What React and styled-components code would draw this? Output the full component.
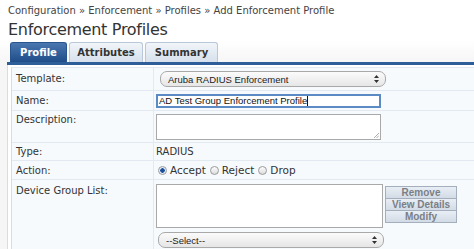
import React from 'react'
import styled, { createGlobalStyle } from 'styled-components'

const Global = createGlobalStyle`
  html, body { margin: 0; padding: 0; background: #fff; }
  body { font-family: "DejaVu Sans", Verdana, sans-serif; color: #333; }
`

const Page = styled.div`
  width: 474px;
  height: 249px;
  overflow: hidden;
  padding: 4px 0 0 7px;
  box-sizing: border-box;
  background: linear-gradient(#fff 0, #fff 40px, #f6f6f6 62px);
`

const Crumbs = styled.div`
  font-size: 10px;
  line-height: 13px;
  color: #444;
  padding-left: 1px;
`

const Title = styled.h1`
  margin: 3px 0 2px 1px;
  font-size: 16px;
  line-height: 20px;
  letter-spacing: -0.3px;
  font-weight: normal;
  color: #333;
`

const TabBar = styled.div`
  display: flex;
  gap: 2px;
  padding-left: 3px;
  border-bottom: 3px solid #2e5e9a;
`

const Tab = styled.div`
  width: ${p => p.w}px;
  height: 20px;
  box-sizing: border-box;
  display: flex;
  align-items: center;
  justify-content: center;
  font-size: 10px;
  font-weight: bold;
  border-radius: 3px 3px 0 0;
  color: ${p => (p.active ? '#fff' : '#333')};
  background: ${p =>
    p.active
      ? 'linear-gradient(#4a77b0, #1f4d89)'
      : 'linear-gradient(#f1f5f9, #d6e0ec)'};
  border: 1px solid ${p => (p.active ? '#28558f' : '#b9c7d8')};
  border-bottom: none;
`

const Panel = styled.div`
  border-left: 1px solid #d7dde6;
  padding: 2px 0 0 3px;
  background: #fff;
`

const Form = styled.div`
  display: grid;
  grid-template-columns: 142px 1fr;
  border-left: 1px solid #d7dde6;
  border-top: 1px solid #e2e9f0;
  background: #f6fafd;
`

const Label = styled.div`
  font-size: 10px;
  color: #333;
  padding: ${p => p.pad || '5px 4px'};
  border-right: 1px solid #e2e9f0;
  border-bottom: 1px solid #e2e9f0;
  height: ${p => p.h}px;
  box-sizing: border-box;
`

const Cell = styled.div`
  font-size: 10px;
  color: #333;
  padding: ${p => p.pad || '0 4px'};
  border-bottom: 1px solid #e2e9f0;
  height: ${p => p.h}px;
  box-sizing: border-box;
  display: flex;
  flex-direction: column;
  justify-content: ${p => p.top ? 'flex-start' : 'center'};
`

const SelectBox = styled.div`
  width: 226px;
  height: 16px;
  box-sizing: border-box;
  margin-left: 2px;
  border: 1px solid #a9a9a9;
  border-radius: 7px;
  background: linear-gradient(#fbfbfb, #e6e6e6);
  display: flex;
  align-items: center;
  justify-content: space-between;
  padding: 0 6px 0 7px;
  font-family: "Liberation Sans", Arial, sans-serif;
  font-size: 9.5px;
  color: #222;
`

const TextInput = styled.div`
  width: 225px;
  height: 14px;
  box-sizing: border-box;
  border: 2px solid #5b8ac4;
  background: #fff;
  font-family: "Liberation Sans", Arial, sans-serif;
  font-size: 9.5px;
  line-height: 10px;
  color: #111;
  padding-left: 1px;
  display: flex;
  align-items: center;
  span { border-right: 1px solid #111; }
`

const TextArea = styled.div`
  position: relative;
  width: 225px;
  height: 26px;
  box-sizing: border-box;
  border: 1px solid #a9a9a9;
  background: #fff;
`

const Grip = styled.svg`
  position: absolute;
  right: 1px;
  bottom: 1px;
`

const Radios = styled.div`
  display: flex;
  align-items: center;
  gap: 3px;
  font-size: 10.5px;
  color: #333;
  padding-left: 2px;
`

const Radio = styled.span`
  width: 9px;
  height: 9px;
  border-radius: 50%;
  box-sizing: border-box;
  border: 1px solid #9a9a9a;
  background: ${p => p.on ? 'radial-gradient(#1e4f9a 0 2px, #e6eef8 2.5px)' : 'linear-gradient(#fdfdfd, #dcdcdc)'};
  display: inline-block;
  margin-left: ${p => p.first ? 0 : 1}px;
`

const ListRow = styled.div`
  display: flex;
  gap: 2px;
  align-items: flex-start;
`

const ListBox = styled.div`
  width: 227px;
  height: 44px;
  box-sizing: border-box;
  border: 1px solid #a9a9a9;
  background: #fff;
`

const Buttons = styled.div`
  display: flex;
  flex-direction: column;
  margin-top: 3px;
`

const Btn = styled.div`
  width: 72px;
  height: 13px;
  box-sizing: border-box;
  border: 1px solid #a4afbd;
  margin-top: -1px;
  background: linear-gradient(#e9eef4, #d2dbe6);
  font-family: "Liberation Sans", Arial, sans-serif;
  font-size: 10px;
  font-weight: bold;
  color: #7a7f86;
  text-align: center;
  line-height: 11px;
`

const Gap = styled.div`
  height: 4px;
`

const Arrows = () => (
  <svg width="5" height="8" viewBox="0 0 5 8">
    <path d="M2.5 0 L5 3 L0 3 Z M0 5 L5 5 L2.5 8 Z" fill="#333" />
  </svg>
)

export default function App() {
  return (
    <>
      <Global />
      <Page>
        <Crumbs>Configuration » Enforcement » Profiles » Add Enforcement Profile</Crumbs>
        <Title>Enforcement Profiles</Title>
        <TabBar>
          <Tab active w={57}>Profile</Tab>
          <Tab w={74}>Attributes</Tab>
          <Tab w={73}>Summary</Tab>
        </TabBar>
        <Panel>
          <Form>
            <Label h={23}>Template:</Label>
            <Cell h={23}>
              <SelectBox>
                Aruba RADIUS Enforcement
                <Arrows />
              </SelectBox>
            </Cell>
            <Label h={20} pad="4px 4px">Name:</Label>
            <Cell h={20} pad="0 2px">
              <TextInput>
                <span>AD Test Group Enforcement Profile</span>
              </TextInput>
            </Cell>
            <Label h={32} pad="3px 4px">Description:</Label>
            <Cell h={32} pad="0 2px">
              <TextArea>
                <Grip width="6" height="6" viewBox="0 0 6 6">
                  <path d="M6 1 L1 6 M6 3.5 L3.5 6" stroke="#999" strokeWidth="0.8" />
                </Grip>
              </TextArea>
            </Cell>
            <Label h={18} pad="3px 4px">Type:</Label>
            <Cell h={18} pad="0 2px">RADIUS</Cell>
            <Label h={19} pad="4px 4px">Action:</Label>
            <Cell h={19} pad="0 2px">
              <Radios>
                <Radio on first />Accept
                <Radio />Reject
                <Radio />Drop
              </Radios>
            </Cell>
            <Label h={80} pad="5px 4px">Device Group List:</Label>
            <Cell h={80} top pad="4px 2px">
              <ListRow>
                <ListBox />
                <Buttons>
                  <Btn>Remove</Btn>
                  <Btn>View Details</Btn>
                  <Btn>Modify</Btn>
                </Buttons>
              </ListRow>
              <Gap />
              <SelectBox>
                --Select--
                <Arrows />
              </SelectBox>
            </Cell>
          </Form>
        </Panel>
      </Page>
    </>
  )
}
